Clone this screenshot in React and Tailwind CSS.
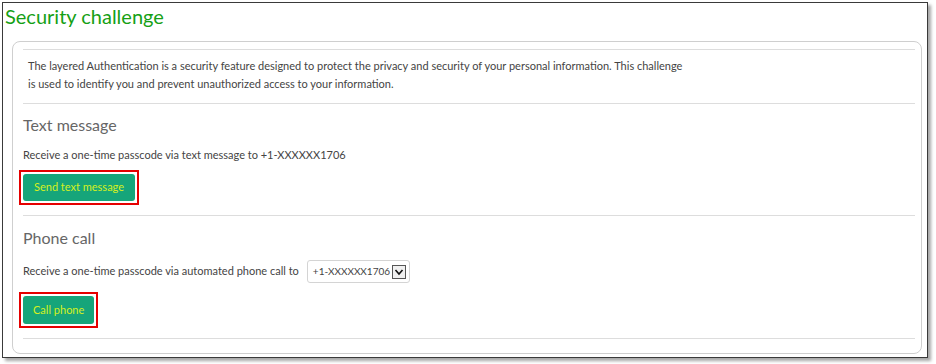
export default function App() {
  const font = { fontFamily: "Lato, 'Open Sans', sans-serif" };
  return (
    <div className="w-[936px] h-[364px] bg-white" style={font}>
      <div className="ml-[2px] mt-[2px] w-[926px] h-[356px] border border-[#3a3a3a] bg-white shadow-[3px_3px_3px_rgba(0,0,0,0.35)] flex flex-col">
        <h1 className="text-[20px] leading-[26px] text-[#15a015] pl-[2px]">
          Security challenge
        </h1>
        <div className="ml-[9px] mr-[5px] mt-[12px] h-[313px] border border-[#cfcfcf] rounded-[8px] pl-[10px] pr-[6px] pt-[7px]">
          <hr className="border-t border-[#dddddd]" />
          <p className="pl-[5px] pt-[7px] pb-[10px] text-[11px] leading-[18px] text-[#444]">
            The layered Authentication is a security feature designed to protect the privacy and security of your personal information. This challenge
            <br />
            is used to identify you and prevent unauthorized access to your information.
          </p>
          <hr className="border-t border-[#dddddd]" />
          <div className="pt-[11px] pb-[10px]">
            <h2 className="text-[16px] leading-[20px] text-[#666]">Text message</h2>
            <p className="mt-[13px] text-[11px] leading-[14px] text-[#444]">
              Receive a one-time passcode via text message to +1-XXXXXX1706
            </p>
            <div className="mt-[8px] -ml-[4px] w-fit border-2 border-[#e50000] p-[2px]">
              <button className="flex items-center h-[27px] bg-[#16a57a] text-[#d4f01e] text-[11px] px-[11px] rounded-[3px]">
                Send text message
              </button>
            </div>
          </div>
          <hr className="border-t border-[#dddddd]" />
          <div className="pt-[12px] pb-[10px]">
            <h2 className="text-[16px] leading-[20px] text-[#666]">Phone call</h2>
            <div className="mt-[12px] flex items-center gap-[8px] text-[11px] text-[#444]">
              <span>Receive a one-time passcode via automated phone call to</span>
              <div className="h-[23px] w-[103px] border border-[#d4d4d4] rounded-[3px] flex items-center pl-[5px] pr-[3px] justify-between">
                <span className="text-[10px] text-[#444]">+1-XXXXXX1706</span>
                <span className="w-[14px] h-[14px] border border-[#555] bg-[#f0f0f0] flex items-center justify-center">
                  <svg width="10" height="8" viewBox="0 0 10 8">
                    <path d="M1.5 2 L5 6 L8.5 2" fill="none" stroke="#111" strokeWidth="1.6" />
                  </svg>
                </span>
              </div>
            </div>
            <div className="mt-[9px] -ml-[4px] w-fit border-2 border-[#e50000] p-[2px]">
              <button className="flex items-center h-[28px] bg-[#16a57a] text-[#d4f01e] text-[11px] px-[10px] rounded-[3px]">
                Call phone
              </button>
            </div>
          </div>
          <hr className="border-t border-[#dddddd]" />
        </div>
      </div>
    </div>
  );
}
